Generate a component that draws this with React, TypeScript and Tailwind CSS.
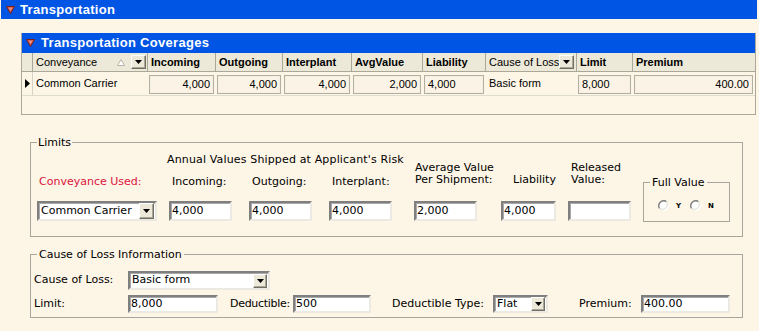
import React from 'react'

const gridFont = "font-['Liberation_Sans',Arial,sans-serif] text-[11px]"
const formFont = "font-['DejaVu_Sans',Verdana,sans-serif] text-[11px]"

// red collapse arrow shown on the blue bars
function Collapse({ className = '' }: { className?: string }) {
  return (
    <svg width="9" height="8" viewBox="0 0 9 8" className={className}>
      <polygon points="0.5,0.5 8.5,0.5 4.5,7.5" fill="#d25a50" stroke="#7a2018" strokeWidth="1" />
      <polygon points="2.5,1.8 6.5,1.8 4.5,5" fill="#e8948a" />
    </svg>
  )
}

function Caret() {
  return (
    <svg width="7" height="4" viewBox="0 0 7 4">
      <polygon points="0,0 7,0 3.5,4" fill="#000" />
    </svg>
  )
}

function DropButton({ className = '' }: { className?: string }) {
  return (
    <div
      className={`flex items-center justify-center bg-[#ece9d8] border border-t-white border-l-white border-r-[#716f64] border-b-[#716f64] shadow-[inset_-1px_-1px_0_#aca899] ${className}`}
    >
      <Caret />
    </div>
  )
}

// sunken white text box like the old WinForms controls
function TextBox({ value = '', className = '' }: { value?: string; className?: string }) {
  return (
    <div
      className={`flex items-center bg-white pl-[1px] border-2 border-t-[#7f7f7f] border-l-[#7f7f7f] border-r-[#ebe9e1] border-b-[#ebe9e1] shadow-[inset_1px_1px_0_#a9a9a9] whitespace-nowrap overflow-hidden ${className}`}
    >
      {value}
    </div>
  )
}

function Select({ value, className = '', btn = '' }: { value: string; className?: string; btn?: string }) {
  return (
    <div
      className={`flex items-center bg-white pl-[2px] pr-[1px] border-2 border-t-[#7f7f7f] border-l-[#7f7f7f] border-r-[#ebe9e1] border-b-[#ebe9e1] shadow-[inset_1px_1px_0_#a9a9a9] whitespace-nowrap ${className}`}
    >
      <span className="flex-1">{value}</span>
      <DropButton className={btn} />
    </div>
  )
}

function Radio({ label }: { label: string }) {
  return (
    <div className="flex items-center">
      <svg width="12" height="12" viewBox="0 0 12 12">
        <circle cx="6" cy="6" r="5" fill="#fff" />
        <path d="M1.6 8.5 A5 5 0 0 1 8.5 1.6" fill="none" stroke="#7f7f7f" strokeWidth="1.4" />
        <path d="M8.5 1.6 A5 5 0 0 1 1.6 8.5" fill="none" stroke="#e4e2da" strokeWidth="1.2" />
      </svg>
      <span className="ml-[6px] font-['DejaVu_Sans',sans-serif] text-[7px] font-bold">{label}</span>
    </div>
  )
}

function GridBox({ value, right = false, className = '' }: { value: string; right?: boolean; className?: string }) {
  return (
    <div
      className={`h-[19px] mt-[3px] ml-[1px] mr-[2px] flex items-center px-[3px] border border-[#b3b0a2] shadow-[inset_0_0_0_1px_#f3efe3] bg-[#fbf4e6] ${right ? 'justify-end' : ''} ${className}`}
    >
      {value}
    </div>
  )
}

const columns = [
  { key: 'incoming', label: 'Incoming', w: 'w-[68px]' },
  { key: 'outgoing', label: 'Outgoing', w: 'w-[67px]' },
  { key: 'interplant', label: 'Interplant', w: 'w-[69px]' },
  { key: 'avg', label: 'AvgValue', w: 'w-[71px]' },
  { key: 'liability', label: 'Liability', w: 'w-[63px]' },
]

export default function App() {
  return (
    <div className="w-[759px] h-[331px] bg-[#fdf5e6] overflow-hidden text-black">
      {/* section bar */}
      <div className="h-[19px] ml-[1px] mr-[2px] bg-[#0055e5] flex items-center">
        <Collapse className="ml-[5px]" />
        <span className="ml-[5px] text-white font-['Liberation_Sans',Arial,sans-serif] font-bold text-[13px] tracking-[0.3px]">
          Transportation
        </span>
      </div>

      {/* coverages grid */}
      <div className={`ml-[21px] mt-[14px] w-[735px] h-[82px] border border-t-0 border-[#aca899] whitespace-nowrap ${gridFont}`}>
        <div className="h-[20px] bg-[#0055e5] flex items-center">
          <Collapse className="ml-[4px]" />
          <span className="ml-[6px] text-white font-bold text-[13px] tracking-[0.3px]">Transportation Coverages</span>
        </div>

        <div className="h-[19px] flex bg-[#ece9d8] border-b border-[#aca899]">
          <div className="w-[11px] border-r border-[#aca899]" />
          <div className="w-[115px] flex items-center pl-[3px] pr-[1px] border-r border-[#aca899]">
            <span>Conveyance</span>
            <svg width="8" height="7" viewBox="0 0 8 7" className="ml-auto mr-[6px]">
              <polygon points="4,0.5 7.5,6.5 0.5,6.5" fill="#fff" stroke="#b8b5a8" />
            </svg>
            <DropButton className="w-[15px] h-[14px]" />
          </div>
          {columns.map((c) => (
            <div key={c.key} className={`${c.w} flex items-center pl-[3px] font-bold border-r border-[#aca899]`}>
              {c.label}
            </div>
          ))}
          <div className="w-[91px] flex items-center pl-[3px] pr-[2px] border-r border-[#aca899]">
            <span>Cause of Loss</span>
            <DropButton className="ml-auto w-[15px] h-[14px] shrink-0" />
          </div>
          <div className="w-[56px] flex items-center pl-[3px] font-bold border-r border-[#aca899]">Limit</div>
          <div className="flex-1 flex items-center pl-[3px] font-bold">Premium</div>
        </div>

        <div className="h-[24px] flex border-b border-[#dedbcf]">
          <div className="w-[11px] flex items-center justify-center border-r border-[#d6d3c6]">
            <svg width="5" height="9" viewBox="0 0 5 9">
              <polygon points="0,0 5,4.5 0,9" fill="#000" />
            </svg>
          </div>
          <div className="w-[115px] flex items-center pl-[3px]">Common Carrier</div>
          <div className="w-[68px]"><GridBox value="4,000" right /></div>
          <div className="w-[67px]"><GridBox value="4,000" right /></div>
          <div className="w-[69px]"><GridBox value="4,000" right /></div>
          <div className="w-[71px]"><GridBox value="2,000" right /></div>
          <div className="w-[63px]"><GridBox value="4,000" /></div>
          <div className="w-[91px] flex items-center pl-[3px]">Basic form</div>
          <div className="w-[56px]"><GridBox value="8,000" /></div>
          <div className="flex-1"><GridBox value="400.00" right /></div>
        </div>
      </div>

      {/* limits */}
      <fieldset className={`ml-[30px] mt-[21px] w-[713px] h-[101px] border border-[#a8a69c] ${formFont}`}>
        <legend className="ml-[6px] px-[1px] leading-[13px]">Limits</legend>
        <div className="mt-[4px] pl-[136px] leading-[13px] whitespace-nowrap tracking-[0.15px]">Annual Values Shipped at Applicant's Risk</div>

        <div className="mt-[-6px] h-[61px] flex items-end pl-[6px] whitespace-nowrap">
          <div className="w-[132px] flex flex-col">
            <div className="pl-[2px] leading-[13px] mb-[13px] text-[#dc143c]">Conveyance Used:</div>
            <Select value="Common Carrier" className="w-[120px] h-[20px]" btn="w-[15px] h-[16px]" />
          </div>
          <div className="w-[80px] flex flex-col">
            <div className="pl-[3px] leading-[13px] mb-[13px]">Incoming:</div>
            <TextBox value="4,000" className="w-[63px] h-[20px]" />
          </div>
          <div className="w-[80px] flex flex-col">
            <div className="pl-[3px] leading-[13px] mb-[13px]">Outgoing:</div>
            <TextBox value="4,000" className="w-[63px] h-[20px]" />
          </div>
          <div className="w-[85px] flex flex-col">
            <div className="pl-[3px] leading-[13px] mb-[13px]">Interplant:</div>
            <TextBox value="4,000" className="w-[63px] h-[20px]" />
          </div>
          <div className="w-[87px] flex flex-col">
            <div className="pl-[1px] leading-[12px] mb-[15px]">
              Average Value
              <br />
              Per Shipment:
            </div>
            <TextBox value="2,000" className="w-[63px] h-[20px]" />
          </div>
          <div className="w-[67px] flex flex-col">
            <div className="pl-[12px] leading-[13px] mb-[15px]">Liability</div>
            <TextBox value="4,000" className="w-[55px] h-[20px]" />
          </div>
          <div className="w-[75px] flex flex-col">
            <div className="pl-[3px] leading-[12px] mb-[15px]">
              Released
              <br />
              Value:
            </div>
            <TextBox className="w-[63px] h-[20px]" />
          </div>
          <fieldset className="w-[87px] h-[46px] mb-[-1px] border border-[#a8a69c]">
            <legend className="ml-[6px] px-[2px] leading-[13px]">Full Value</legend>
            <div className="mt-[11px] pl-[14px] flex items-center gap-[9px]">
              <Radio label="Y" />
              <Radio label="N" />
            </div>
          </fieldset>
        </div>
      </fieldset>

      {/* cause of loss */}
      <fieldset className={`ml-[30px] mt-[11px] w-[713px] h-[70px] border border-[#a8a69c] ${formFont}`}>
        <legend className="ml-[6px] px-[2px] leading-[13px]">Cause of Loss Information</legend>
        <div className="mt-[10px] pl-[3px] flex items-center whitespace-nowrap">
          <div className="w-[94px]">Cause of Loss:</div>
          <Select value="Basic form" className="w-[142px] h-[19px]" btn="w-[14px] h-[14px]" />
        </div>
        <div className="mt-[5px] pl-[3px] flex items-center whitespace-nowrap">
          <div className="w-[94px]">Limit:</div>
          <TextBox value="8,000" className="w-[90px] h-[18px]" />
          <div className="w-[63px] ml-[12px] tracking-[-0.3px]">Deductible:</div>
          <TextBox value="500" className="w-[78px] h-[18px]" />
          <div className="w-[101px] ml-[21px]">Deductible Type:</div>
          <Select value="Flat" className="w-[55px] h-[18px]" btn="w-[14px] h-[14px]" />
          <div className="w-[62px] ml-[31px]">Premium:</div>
          <TextBox value="400.00" className="w-[89px] h-[18px]" />
        </div>
      </fieldset>
    </div>
  )
}
